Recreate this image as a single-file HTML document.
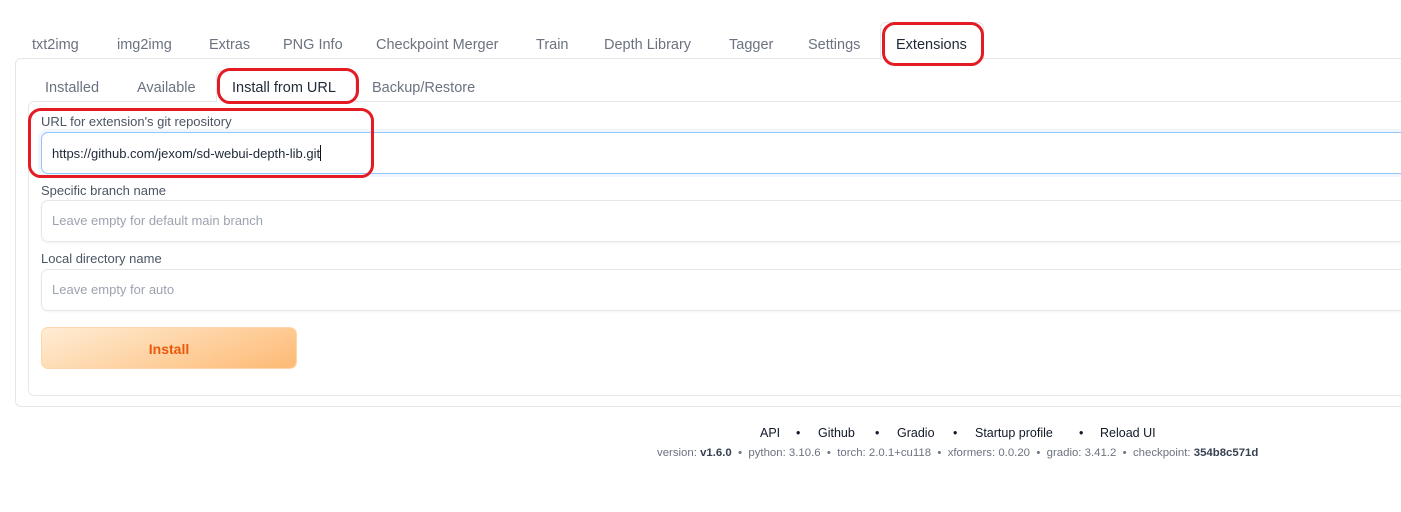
<!DOCTYPE html>
<html><head><meta charset="utf-8"><style>
*{box-sizing:border-box;margin:0;padding:0}
body{width:1401px;height:512px;background:#fff;font-family:"Liberation Sans",sans-serif;position:relative;overflow:hidden;color:#374151}
.a{position:absolute;white-space:nowrap}
.tab{font-size:14.5px;color:#6b7280;top:37px}
.sub{font-size:14.5px;color:#6b7280;top:80px}
.lbl{font-size:13px;color:#4b5563}
.inp{position:absolute;left:41px;width:1400px;height:42px;border:1px solid #e5e7eb;border-radius:7px;box-shadow:0 1px 2px rgba(0,0,0,.05)}
.ph{font-size:13px;color:#9ca3af}
.red{position:absolute;border:3.5px solid #e31b23;border-radius:13px}
.f{font-size:12.5px;color:#111827;top:426px}
.v{font-size:11.4px;color:#6b7280;top:447px}
</style></head><body>
<div class="a" style="left:15px;top:58px;width:1400px;height:349px;border:1px solid #e5e7eb;border-radius:6px"></div>
<div class="a" style="left:880px;top:22px;width:104px;height:38px;background:#fff;border:1px solid #e5e7eb;border-bottom:none;border-radius:6px 6px 0 0"></div>
<div class="a tab" style="left:32px">txt2img</div>
<div class="a tab" style="left:117px">img2img</div>
<div class="a tab" style="left:209px">Extras</div>
<div class="a tab" style="left:283px">PNG Info</div>
<div class="a tab" style="left:376px">Checkpoint Merger</div>
<div class="a tab" style="left:536px">Train</div>
<div class="a tab" style="left:604px">Depth Library</div>
<div class="a tab" style="left:729px">Tagger</div>
<div class="a tab" style="left:808px">Settings</div>
<div class="a tab" style="left:896px;color:#1f2937">Extensions</div>

<div class="a" style="left:28px;top:101px;width:1400px;height:295px;border:1px solid #e5e7eb;border-radius:6px"></div>
<div class="a" style="left:216px;top:70px;width:140px;height:32px;background:#fff;border:1px solid #e5e7eb;border-bottom:none;border-radius:6px 6px 0 0"></div>
<div class="a sub" style="left:45px">Installed</div>
<div class="a sub" style="left:137px">Available</div>
<div class="a sub" style="left:232px;color:#1f2937">Install from URL</div>
<div class="a sub" style="left:372px">Backup/Restore</div>

<div class="a lbl" style="left:41px;top:114px">URL for extension's git repository</div>
<div class="inp" style="top:132px;border-color:#93c5fd;box-shadow:0 0 0 3px #eff6ff"></div>
<div class="a" style="left:52px;top:145px;font-size:13px;color:#1f2937">https://github.com/jexom/sd-webui-depth-lib.git<span style="display:inline-block;width:1px;height:16px;background:#111;vertical-align:-3px"></span></div>

<div class="a lbl" style="left:41px;top:183px">Specific branch name</div>
<div class="inp" style="top:200px"></div>
<div class="a ph" style="left:52px;top:213px">Leave empty for default main branch</div>

<div class="a lbl" style="left:41px;top:251px">Local directory name</div>
<div class="inp" style="top:269px"></div>
<div class="a ph" style="left:52px;top:282px">Leave empty for auto</div>

<div class="a" style="left:41px;top:327px;width:256px;height:42px;border:1px solid #fed7aa;border-radius:7px;background:linear-gradient(160deg,#ffedd5,#fdba74);text-align:center;line-height:42px;font-size:14px;font-weight:bold;color:#ea580c">Install</div>

<div class="red" style="left:882px;top:22px;width:102px;height:44px"></div>
<div class="red" style="left:217px;top:68px;width:142px;height:36px"></div>
<div class="red" style="left:28px;top:108px;width:346px;height:70px"></div>

<div class="a f" style="left:760px">API</div>
<div class="a f" style="left:796px">•</div>
<div class="a f" style="left:818px">Github</div>
<div class="a f" style="left:875px">•</div>
<div class="a f" style="left:897px">Gradio</div>
<div class="a f" style="left:953px">•</div>
<div class="a f" style="left:975px">Startup profile</div>
<div class="a f" style="left:1079px">•</div>
<div class="a f" style="left:1100px">Reload UI</div>
<div class="a v" style="left:657px">version: <b style="color:#374151">v1.6.0</b> &nbsp;• &nbsp;python: 3.10.6 &nbsp;• &nbsp;torch: 2.0.1+cu118 &nbsp;• &nbsp;xformers: 0.0.20 &nbsp;• &nbsp;gradio: 3.41.2 &nbsp;• &nbsp;checkpoint: <b style="color:#374151">354b8c571d</b></div>
</body></html>
